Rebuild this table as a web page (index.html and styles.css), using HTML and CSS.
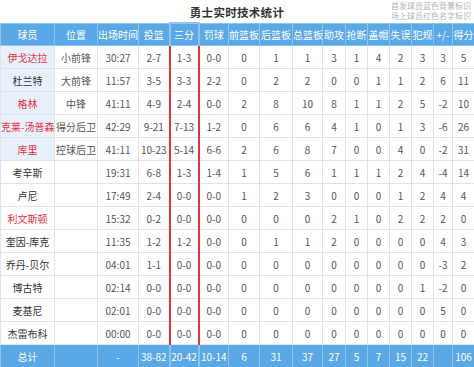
FILE: index.html
```html
<!DOCTYPE html>
<html lang="zh">
<head>
<meta charset="utf-8">
<link rel="stylesheet" href="styles.css">
</head>
<body>
<div class="top">
  <div class="spacer"></div>
  <div class="title">勇士实时技术统计</div>
  <div class="note">首发球员蓝色背景标识<br>场上球员红色名字标识</div>
</div>
<table class="stats">
  <colgroup>
    <col style="width:54px"><col style="width:43px"><col style="width:41px"><col style="width:31px">
    <col style="width:29px"><col style="width:30px"><col style="width:31px"><col style="width:33px">
    <col style="width:30px"><col style="width:23px"><col style="width:22px"><col style="width:22px">
    <col style="width:22px"><col style="width:22px"><col style="width:19px"><col style="width:22px">
  </colgroup>
  <thead>
    <tr class="head">
      <th>球员</th><th>位置</th><th>出场时间</th><th>投篮</th><th class="hl">三分</th><th>罚球</th><th>前篮板</th><th>后篮板</th><th>总篮板</th><th>助攻</th><th>抢断</th><th>盖帽</th><th>失误</th><th>犯规</th><th>+/-</th><th>得分</th>
    </tr>
  </thead>
  <tbody>
    <tr><td class="name start on">伊戈达拉</td><td>小前锋</td><td>30:27</td><td>2-7</td><td class="hl">1-3</td><td>0-0</td><td>0</td><td>1</td><td>1</td><td>3</td><td>1</td><td>4</td><td>2</td><td>3</td><td>3</td><td>5</td></tr>
    <tr><td class="name start">杜兰特</td><td>大前锋</td><td>11:57</td><td>3-5</td><td class="hl">3-3</td><td>2-2</td><td>0</td><td>2</td><td>2</td><td>0</td><td>0</td><td>1</td><td>1</td><td>2</td><td>6</td><td>11</td></tr>
    <tr><td class="name start on">格林</td><td>中锋</td><td>41:11</td><td>4-9</td><td class="hl">2-4</td><td>0-0</td><td>2</td><td>8</td><td>10</td><td>8</td><td>1</td><td>1</td><td>2</td><td>5</td><td>-2</td><td>10</td></tr>
    <tr><td class="name start on">克莱-汤普森</td><td>得分后卫</td><td>42:29</td><td>9-21</td><td class="hl">7-13</td><td>1-2</td><td>0</td><td>6</td><td>6</td><td>4</td><td>1</td><td>0</td><td>1</td><td>3</td><td>-6</td><td>26</td></tr>
    <tr><td class="name start on">库里</td><td>控球后卫</td><td>41:11</td><td>10-23</td><td class="hl">5-14</td><td>6-6</td><td>2</td><td>6</td><td>8</td><td>7</td><td>0</td><td>0</td><td>4</td><td>0</td><td>-2</td><td>31</td></tr>
    <tr><td class="name">考辛斯</td><td></td><td>19:31</td><td>6-8</td><td class="hl">1-3</td><td>1-4</td><td>1</td><td>5</td><td>6</td><td>1</td><td>1</td><td>1</td><td>2</td><td>4</td><td>-4</td><td>14</td></tr>
    <tr><td class="name">卢尼</td><td></td><td>17:49</td><td>2-4</td><td class="hl">0-0</td><td>0-0</td><td>1</td><td>2</td><td>3</td><td>0</td><td>0</td><td>0</td><td>1</td><td>2</td><td>4</td><td>4</td></tr>
    <tr><td class="name on">利文斯顿</td><td></td><td>15:32</td><td>0-2</td><td class="hl">0-0</td><td>0-0</td><td>0</td><td>0</td><td>0</td><td>2</td><td>1</td><td>0</td><td>2</td><td>2</td><td>2</td><td>0</td></tr>
    <tr><td class="name">奎因-库克</td><td></td><td>11:35</td><td>1-2</td><td class="hl">1-2</td><td>0-0</td><td>0</td><td>1</td><td>1</td><td>2</td><td>0</td><td>0</td><td>0</td><td>0</td><td>4</td><td>3</td></tr>
    <tr><td class="name">乔丹-贝尔</td><td></td><td>04:01</td><td>1-1</td><td class="hl">0-0</td><td>0-0</td><td>0</td><td>0</td><td>0</td><td>0</td><td>0</td><td>0</td><td>0</td><td>0</td><td>-3</td><td>2</td></tr>
    <tr><td class="name">博古特</td><td></td><td>02:14</td><td>0-0</td><td class="hl">0-0</td><td>0-0</td><td>0</td><td>0</td><td>0</td><td>0</td><td>0</td><td>0</td><td>0</td><td>1</td><td>-2</td><td>0</td></tr>
    <tr><td class="name">麦基尼</td><td></td><td>02:01</td><td>0-0</td><td class="hl">0-0</td><td>0-0</td><td>0</td><td>0</td><td>0</td><td>0</td><td>0</td><td>0</td><td>0</td><td>0</td><td>5</td><td>0</td></tr>
    <tr><td class="name">杰雷布科</td><td></td><td>00:00</td><td>0-0</td><td class="hl">0-0</td><td>0-0</td><td>0</td><td>0</td><td>0</td><td>0</td><td>0</td><td>0</td><td>0</td><td>0</td><td>0</td><td>0</td></tr>
  </tbody>
  <tfoot>
    <tr class="total"><td>总计</td><td></td><td>-</td><td>38-82</td><td class="hl last">20-42</td><td>10-14</td><td>6</td><td>31</td><td>37</td><td>27</td><td>5</td><td>7</td><td>15</td><td>22</td><td></td><td>106</td></tr>
  </tfoot>
</table>
</body>
</html>
```
FILE: styles.css
```css
html, body {
  margin: 0;
  padding: 0;
  background: #ffffff;
}
body {
  width: 474px;
  height: 367px;
  overflow: hidden;
  font-family: "Noto Sans CJK SC", "Open Sans", sans-serif;
  color: #444;
}
.top {
  display: grid;
  grid-template-columns: 1fr auto 1fr;
  align-items: center;
  height: 22px;
}
.title {
  font-size: 11.5px;
  font-weight: bold;
  color: #333;
  letter-spacing: 0.3px;
  padding-top: 2px;
}
.note {
  justify-self: end;
  font-size: 8px;
  line-height: 10px;
  color: #b4b4b4;
  padding-right: 3px;
  text-align: left;
}
.stats {
  width: 474px;
  table-layout: fixed;
  border-collapse: collapse;
  font-size: 10px;
}
.stats th, .stats td {
  padding: 0;
  text-align: center;
  white-space: nowrap;
  overflow: visible;
  border: 1px solid #dfe4ea;
  height: 22px;
  font-weight: normal;
}
.stats tr.head th {
  background: #5aa9e6;
  color: #ffffff;
  border-color: #8fc4ee;
  height: 21px;
}
.stats tbody td {
  color: #555;
}
.stats td.name {
  color: #333;
}
.stats td.start {
  background: #e8f1fb;
}
.stats td.on {
  color: #e8303f;
}
.stats tr.total td {
  background: #5aa9e6;
  color: #ffffff;
  border-color: #8fc4ee;
  height: 22px;
}
.stats .hl {
  border-left: 2px solid #d9373c;
  border-right: 2px solid #d9373c;
}
.stats th.hl {
  border-top: 2px solid #d9373c;
}
.stats td.hl.last {
  border-bottom: 2px solid #d9373c;
}
```
